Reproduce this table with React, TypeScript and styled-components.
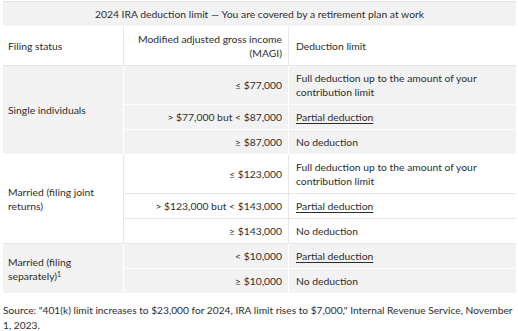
import React from "react";
import styled, { createGlobalStyle } from "styled-components";

const Global = createGlobalStyle`
  html, body { margin: 0; padding: 0; background: #fff; }
  body { font-family: "Lato", "Noto Sans", sans-serif; color: #2d2d2d; }
`;

const Page = styled.div`
  padding: 1px 2px 0 3px;
  width: 513px;
`;

const Table = styled.table`
  width: 100%;
  border-collapse: separate;
  border-spacing: 0;
  border-top: 1px solid #e6e6e6;
  font-size: 10.35px;
  line-height: 14px;
  table-layout: fixed;
`;

const TitleCell = styled.th`
  background: #f2f2f2;
  font-weight: 400;
  text-align: center;
  padding: 5px 6px;
  height: 14px;
  border-bottom: 1px solid #fff;
`;

const Cell = styled.td<{ $gray?: boolean; $align?: "left" | "right"; $first?: boolean }>`
  background: ${(p) => (p.$gray ? "#f2f2f2" : "#fff")};
  text-align: ${(p) => p.$align ?? "left"};
  vertical-align: middle;
  padding: 5px 6px 5px ${(p) => (p.$first ? "5px" : "7px")};
  border-left: ${(p) => (p.$first ? "none" : `1px solid ${p.$gray ? "#fff" : "#e6e6e6"}`)};
  border-bottom: 1px solid ${(p) => (p.$gray ? "#fff" : "#e6e6e6")};
`;

const HeadCell = styled(Cell).attrs({ as: "th" })`
  font-weight: 400;
`;

const Link = styled.span`
  text-decoration: underline;
  text-underline-offset: 2px;
`;

const Sup = styled.sup`
  font-size: 7px;
  line-height: 0;
  vertical-align: 3px;
`;

const Source = styled.p`
  margin: 9px -5px 0 0;
  font-size: 10.2px;
  line-height: 15px;
`;

const FULL = "Full deduction up to the amount of your contribution limit";

type Row = { magi: string; limit: React.ReactNode };
type Group = { label: React.ReactNode; gray: boolean; rows: Row[] };

const partial = <Link>Partial deduction</Link>;

const groups: Group[] = [
  {
    label: "Single individuals",
    gray: true,
    rows: [
      { magi: "≤ $77,000", limit: FULL },
      { magi: "> $77,000 but < $87,000", limit: partial },
      { magi: "≥ $87,000", limit: "No deduction" },
    ],
  },
  {
    label: "Married (filing joint returns)",
    gray: false,
    rows: [
      { magi: "≤ $123,000", limit: FULL },
      { magi: "> $123,000 but < $143,000", limit: partial },
      { magi: "≥ $143,000", limit: "No deduction" },
    ],
  },
  {
    label: (
      <>
        Married (filing separately)<Sup>1</Sup>
      </>
    ),
    gray: true,
    rows: [
      { magi: "< $10,000", limit: partial },
      { magi: "≥ $10,000", limit: "No deduction" },
    ],
  },
];

export default function App() {
  return (
    <Page>
      <Global />
      <Table>
        <colgroup>
          <col style={{ width: 120 }} />
          <col style={{ width: 165 }} />
          <col />
        </colgroup>
        <thead>
          <tr>
            <TitleCell colSpan={3}>
              2024 IRA deduction limit — You are covered by a retirement plan at work
            </TitleCell>
          </tr>
          <tr>
            <HeadCell $first>Filing status</HeadCell>
            <HeadCell $align="right">Modified adjusted gross income (MAGI)</HeadCell>
            <HeadCell>Deduction limit</HeadCell>
          </tr>
        </thead>
        <tbody>
          {groups.map((g, gi) =>
            g.rows.map((r, ri) => (
              <tr key={`${gi}-${ri}`}>
                {ri === 0 && (
                  <Cell $first $gray={g.gray} rowSpan={g.rows.length}>
                    {g.label}
                  </Cell>
                )}
                <Cell $gray={g.gray} $align="right">
                  {r.magi}
                </Cell>
                <Cell $gray={g.gray}>{r.limit}</Cell>
              </tr>
            ))
          )}
        </tbody>
      </Table>
      <Source>
        Source: "401(k) limit increases to $23,000 for 2024, IRA limit rises to $7,000," Internal Revenue
        Service, November 1, 2023.
      </Source>
    </Page>
  );
}
